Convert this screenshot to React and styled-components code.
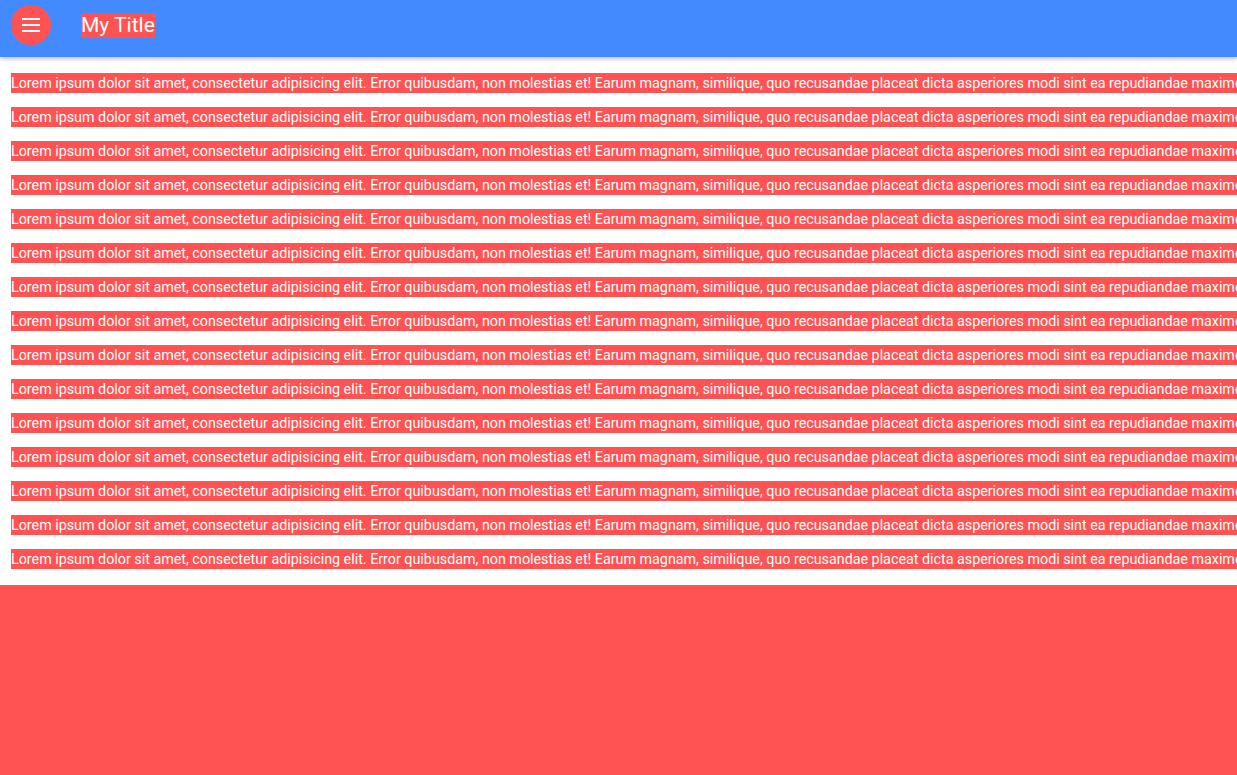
import React from 'react';
import styled, { createGlobalStyle } from "styled-components";

const GlobalStyle = createGlobalStyle`
html, body {
margin: 0;
padding: 0;
background: #ff5252;
font-family: Roboto, "Liberation Sans", sans-serif;
overflow: hidden;
}
`;

const LOREM = 'Lorem ipsum dolor sit amet, consectetur adipisicing elit. Error quibusdam, non molestias et! Earum magnam, similique, quo recusandae placeat dicta asperiores modi sint ea repudiandae maxime, quae porro animi.';

function App() {
    const rows = Array.from({length: 15}, (_, i) => i);
    return (
        <Page>
            <GlobalStyle/>
            <Toolbar>
                <MenuButton type="button" aria-label="menu">
                    <svg width="18" height="14" viewBox="0 0 18 14">
                        <rect x="0" y="0" width="18" height="2" fill="#fff"/>
                        <rect x="0" y="6" width="18" height="2" fill="#fff"/>
                        <rect x="0" y="12" width="18" height="2" fill="#fff"/>
                    </svg>
                </MenuButton>
                <Title>My Title</Title>
            </Toolbar>
            <Content>
                {rows.map(i => <Text key={i}>{LOREM}</Text>)}
            </Content>
        </Page>
    );
}

const Page = styled.div`
min-height: 775px;
background: #ff5252;
`;

const Toolbar = styled.header`
position: relative;
z-index: 1;
height: 57px;
display: flex;
align-items: center;
padding: 0 11px;
gap: 30px;
background: #448aff;
box-shadow: 0 2px 4px rgba(0,0,0,0.25);
`;

const MenuButton = styled.button`
width: 40px;
height: 40px;
margin-top: -7px;
border: none;
border-radius: 50%;
background: #ff5252;
display: flex;
align-items: center;
justify-content: center;
padding: 0;
cursor: pointer;
`;

const Title = styled.span`
margin-top: -7px;
font-size: 21px;
line-height: 25px;
color: #fff;
background: #ff5252;
`;

const Content = styled.main`
background: #fff;
padding: 16px 0 16px 11px;
display: flex;
flex-direction: column;
gap: 14px;
overflow: hidden;
`;

const Text = styled.p`
margin: 0;
font-size: 14.3px;
line-height: 21px;
height: 20px;
color: #fff;
background: #ff5252;
white-space: nowrap;
`;

export default App;
